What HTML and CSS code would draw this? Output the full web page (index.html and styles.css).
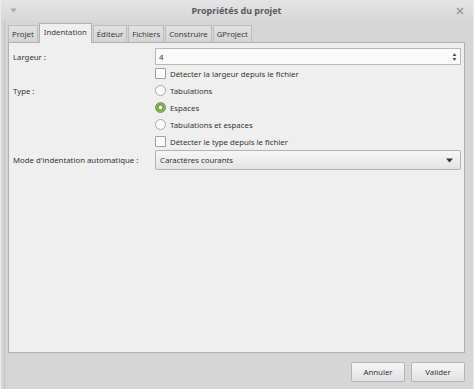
FILE: index.html
```html
<!DOCTYPE html>
<html lang="fr">
<head>
<meta charset="utf-8">
<title>Propriétés du projet</title>
<link rel="stylesheet" href="styles.css">
</head>
<body>
<div class="window">
  <div class="titlebar">
    <svg class="menu-ico" width="7" height="5" viewBox="0 0 7 5"><path d="M0.5 0.5 L6.5 0.5 L3.5 4.5 Z" fill="#a8a8a8"/></svg>
    <span class="title">Propriétés du projet</span>
    <svg class="close-ico" width="8" height="8" viewBox="0 0 8 8"><path d="M1 1 L7 7 M7 1 L1 7" stroke="#9a9a9a" stroke-width="1.6"/></svg>
  </div>
  <div class="content">
    <div class="tabs">
      <div class="tab">Projet</div>
      <div class="tab active">Indentation</div>
      <div class="tab">Éditeur</div>
      <div class="tab">Fichiers</div>
      <div class="tab">Construire</div>
      <div class="tab">GProject</div>
    </div>
    <div class="panel">
      <div class="form">
        <div class="label">Largeur :</div>
        <div class="spin">
          <span class="spin-val">4</span>
          <span class="spin-arrows">
            <svg width="5" height="10" viewBox="0 0 5 10"><path d="M0.5 4 L4.5 4 L2.5 1 Z M0.5 6 L4.5 6 L2.5 9 Z" fill="#555"/></svg>
          </span>
        </div>
        <div></div>
        <label class="opt"><span class="check"></span>Détecter la largeur depuis le fichier</label>
        <div class="label">Type :</div>
        <label class="opt"><span class="radio"></span>Tabulations</label>
        <div></div>
        <label class="opt"><span class="radio on"></span>Espaces</label>
        <div></div>
        <label class="opt"><span class="radio"></span>Tabulations et espaces</label>
        <div></div>
        <label class="opt"><span class="check"></span>Détecter le type depuis le fichier</label>
        <div class="label row-combo">Mode d'indentation automatique :</div>
        <div class="combo">
          <span>Caractères courants</span>
          <svg width="7" height="5" viewBox="0 0 7 5"><path d="M0 0.5 L7 0.5 L3.5 4.5 Z" fill="#333"/></svg>
        </div>
      </div>
    </div>
    <div class="buttons">
      <button class="btn">Annuler</button>
      <button class="btn">Valider</button>
    </div>
  </div>
</div>
</body>
</html>
```
FILE: styles.css
```css
html, body {
  margin: 0;
  padding: 0;
  background: #d6d6d6;
}
body {
  width: 474px;
  height: 389px;
  overflow: hidden;
  font-family: "Noto Sans", "Open Sans", sans-serif;
  font-size: 7.8px;
  color: #333;
}
.window {
  width: 474px;
  height: 389px;
  box-sizing: border-box;
  display: flex;
  flex-direction: column;
  background: #d6d6d6;
  border-left: 1px solid #ececec;
  border-right: 1px solid #ececec;
}
.titlebar {
  height: 21px;
  flex: none;
  display: flex;
  align-items: center;
  justify-content: space-between;
  padding: 0 9px 0 9px;
  background: linear-gradient(#e4e4e4, #d8d8d8);
}
.title {
  font-weight: bold;
  color: #5a5a5a;
  font-size: 9px;
}
.content {
  flex: 1;
  display: flex;
  flex-direction: column;
  margin-left: 3px;
  border-left: 1px solid #c2c2c2;
  padding: 2px 8px 5px 3px;
}
.tabs {
  display: flex;
  gap: 1px;
  align-items: flex-end;
  height: 19px;
}
.tab {
  height: 17px;
  box-sizing: border-box;
  padding: 0 3px;
  line-height: 16px;
  border: 1px solid #bdbdbd;
  border-bottom: none;
  background: linear-gradient(#e2e2e2, #d4d4d4);
  color: #3a3a3a;
}
.tab.active {
  height: 20px;
  line-height: 17px;
  background: #efefef;
  border-color: #b0b0b0;
  margin-bottom: -1px;
  position: relative;
  z-index: 1;
  padding: 0 4px;
}
.panel {
  height: 311px;
  box-sizing: border-box;
  background: #efefef;
  border: 1px solid #b0b0b0;
  padding: 5px 3px 0 4px;
}
.form {
  display: grid;
  grid-template-columns: 142px 1fr;
  grid-auto-rows: 17px;
  align-items: center;
}
.spin {
  height: 17px;
  box-sizing: border-box;
  border: 1px solid #b8b8b8;
  background: #fafafa;
  display: flex;
  align-items: center;
  justify-content: space-between;
  padding: 0 3px 0 3px;
  margin-bottom: 2px;
  align-self: start;
}
.spin-arrows svg { display: block; }
.opt {
  display: flex;
  align-items: center;
  gap: 4px;
}
.check {
  width: 9px;
  height: 9px;
  border: 1px solid #9e9e9e;
  border-radius: 1px;
  background: #fbfbfb;
  flex: none;
}
.radio {
  width: 9px;
  height: 9px;
  border: 1px solid #a8a8a8;
  border-radius: 50%;
  background: #fbfbfb;
  flex: none;
}
.radio.on {
  background: radial-gradient(circle, #f2f7ea 0 1.6px, #7aa344 2.2px 3.4px, #8db45a 3.6px);
  border-color: #6f9a3a;
}
.row-combo {
  margin-top: 3px;
}
.combo {
  height: 20px;
  box-sizing: border-box;
  margin-top: 3px;
  border: 1px solid #b3b3b3;
  border-radius: 2px;
  background: linear-gradient(#f6f6f6, #e4e4e4);
  display: flex;
  align-items: center;
  justify-content: space-between;
  padding: 0 7px 0 4px;
}
.combo svg { display: block; }
.buttons {
  display: flex;
  justify-content: flex-end;
  gap: 6px;
  padding-top: 9px;
}
.btn {
  font-family: inherit;
  font-size: 7.8px;
  color: #333;
  height: 20px;
  width: 54px;
  padding: 0;
  border: 1px solid #b5b5b5;
  border-radius: 2px;
  background: linear-gradient(#f6f6f6, #e2e2e2);
}
```
